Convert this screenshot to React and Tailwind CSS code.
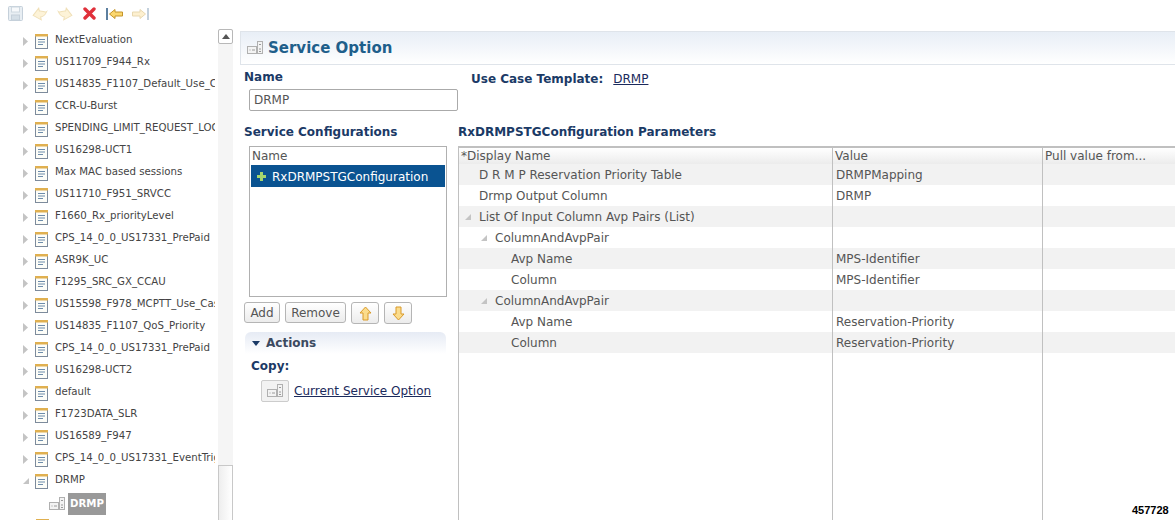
const treeItems = [
  'NextEvaluation', 'US11709_F944_Rx', 'US14835_F1107_Default_Use_Case', 'CCR-U-Burst',
  'SPENDING_LIMIT_REQUEST_LOCAL', 'US16298-UCT1', 'Max MAC based sessions', 'US11710_F951_SRVCC',
  'F1660_Rx_priorityLevel', 'CPS_14_0_0_US17331_PrePaid', 'ASR9K_UC', 'F1295_SRC_GX_CCAU',
  'US15598_F978_MCPTT_Use_Case', 'US14835_F1107_QoS_Priority', 'CPS_14_0_0_US17331_PrePaid',
  'US16298-UCT2', 'default', 'F1723DATA_SLR', 'US16589_F947', 'CPS_14_0_0_US17331_EventTrigger',
];

const params = [
  { name: 'D R M P Reservation Priority Table', value: 'DRMPMapping', indent: 20 },
  { name: 'Drmp Output Column', value: 'DRMP', indent: 20 },
  { name: 'List Of Input Column Avp Pairs (List)', value: '', indent: 20, open: true },
  { name: 'ColumnAndAvpPair', value: '', indent: 36, open: true },
  { name: 'Avp Name', value: 'MPS-Identifier', indent: 52 },
  { name: 'Column', value: 'MPS-Identifier', indent: 52 },
  { name: 'ColumnAndAvpPair', value: '', indent: 36, open: true },
  { name: 'Avp Name', value: 'Reservation-Priority', indent: 52 },
  { name: 'Column', value: 'Reservation-Priority', indent: 52 },
];

const UseCaseIcon = () => (
  <svg width="15" height="17" viewBox="0 0 15 17" className="shrink-0">
    <rect x="1.5" y="1.5" width="12" height="14" fill="#fdfdf8" stroke="#7d8b9c" />
    <rect x="1" y="1" width="13" height="2.5" fill="#e0b050" />
    <path d="M4 6.5h7M4 9h7M4 11.5h5" stroke="#6d8cab" strokeWidth="1" />
  </svg>
);

const ServiceIcon = ({ className = '' }) => (
  <svg width="16" height="14" viewBox="0 0 16 14" className={className}>
    <rect x="0.5" y="5.5" width="9" height="7" fill="#f3f3f3" stroke="#b0b0b0" />
    <rect x="10.5" y="0.5" width="5" height="12" fill="#f3f3f3" stroke="#b0b0b0" />
    <path d="M2.5 9h1M5 9h3M12 3.5h2M12 8h2M12 10.5h2" stroke="#9a9a9a" />
  </svg>
);

const TreeArrow = ({ open }) =>
  open ? (
    <svg width="6" height="6" viewBox="0 0 6 6" className="shrink-0">
      <path d="M6 0V6H0Z" fill="#c4c4c4" />
    </svg>
  ) : (
    <svg width="5" height="9" viewBox="0 0 5 9" className="shrink-0">
      <path d="M0 0L5 4.5L0 9Z" fill="#c4c4c4" />
    </svg>
  );

const ArrowButton = ({ down }) => (
  <button className="flex h-[22px] w-[28px] items-center justify-center rounded-[3px] border border-[#b5b5b5] bg-gradient-to-b from-white to-[#ececec]">
    <svg width="13" height="15" viewBox="0 0 13 15" className={down ? 'rotate-180' : ''}>
      <path d="M6.5 1L12 7H9V14H4V7H1Z" fill="#fbdc8c" stroke="#d99a2b" strokeLinejoin="round" />
    </svg>
  </button>
);

const Toolbar = () => (
  <div className="flex h-[27px] items-center pl-2">
    <svg width="15" height="15" viewBox="0 0 15 15">
      <rect x="0.5" y="0.5" width="14" height="14" rx="1" fill="#e8eef3" stroke="#c5d0da" />
      <rect x="3.5" y="1" width="8" height="5" fill="#f7f9fb" stroke="#ced8e0" />
      <rect x="3.5" y="9" width="8" height="5" fill="#d5dfe7" stroke="#c5d0da" />
    </svg>
    <svg width="16" height="14" viewBox="0 0 16 14" className="ml-[9px]">
      <path d="M8 1L1 7L8 13V10C11 10 13 9 15 6C13 7 11 4 8 4Z" transform="rotate(-12 8 7)" fill="#fdf3d8" stroke="#f0e0b8" />
    </svg>
    <svg width="16" height="14" viewBox="0 0 16 14" className="ml-[9px]">
      <path d="M8 1L15 7L8 13V10C5 10 3 9 1 6C3 7 5 4 8 4Z" transform="rotate(12 8 7)" fill="#fdf3d8" stroke="#f0e0b8" />
    </svg>
    <svg width="13" height="13" viewBox="0 0 13 13" className="ml-[10px]">
      <path d="M2 2L11 11M11 2L2 11" stroke="#e0303a" strokeWidth="3.4" strokeLinecap="round" />
    </svg>
    <div className="ml-[10px] h-[12px] w-[2px] bg-[#5c7f9f]" />
    <svg width="14" height="10" viewBox="0 0 14 10" className="ml-[1px]">
      <path d="M0.5 5L6 0.5V3H13.5V7H6V9.5Z" fill="#fbd76f" stroke="#c4942a" />
    </svg>
    <svg width="14" height="10" viewBox="0 0 14 10" className="ml-[9px]">
      <path d="M13.5 5L8 0.5V3H0.5V7H8V9.5Z" fill="#fdf0d0" stroke="#e8d8b0" />
    </svg>
    <div className="ml-[1px] h-[12px] w-[2px] bg-[#c3d0dc]" />
  </div>
);

const Tree = () => (
  <div className="flex w-[240px] shrink-0 overflow-hidden">
    <div className="w-[215px] shrink-0 overflow-hidden pl-[23px] pt-[3px] text-[10.2px] text-[#444]">
      {treeItems.map((item, i) => (
        <div key={i} className="flex h-[22px] items-center whitespace-nowrap">
          <TreeArrow />
          <span className="ml-[6px] flex"><UseCaseIcon /></span>
          <span className="ml-[6px] -translate-y-px">{item}</span>
        </div>
      ))}
      <div className="flex h-[22px] items-center whitespace-nowrap">
        <TreeArrow open />
        <span className="ml-[5px] flex"><UseCaseIcon /></span>
        <span className="ml-[6px] -translate-y-px">DRMP</span>
      </div>
      <div className="mt-px flex h-[22px] items-center pl-[26px]">
        <ServiceIcon />
        <span className="ml-[3px] flex h-[22px] w-[38px] items-center justify-center bg-[#999] font-bold text-white">DRMP</span>
      </div>
      <div className="ml-[12px] mt-[3px]"><UseCaseIcon /></div>
    </div>
    <div className="ml-[3px] mt-[2px] flex w-[15px] shrink-0 flex-col bg-[#f5f5f5]">
      <div className="flex h-[15px] items-center justify-center rounded-[2px] border border-[#b8b8b8] bg-white">
        <div className="h-0 w-0 border-x-[4px] border-b-[5px] border-x-transparent border-b-[#555]" />
      </div>
      <div className="mt-auto h-[55px] border-x border-t border-[#c8c8c8] bg-gradient-to-r from-[#eee] to-white" />
    </div>
  </div>
);

const ParamColumn = ({ title, width, children }) => (
  <div className={`flex flex-col border-l border-[#c0c0c0] ${width}`}>
    <div className="h-[16px] shrink-0 bg-gradient-to-b from-white to-[#ececec] pl-[2px] leading-[16px]">{title}</div>
    {children}
  </div>
);

const rowBg = (i) => (i % 2 === 0 ? 'bg-[#f2f2f2]' : 'bg-white');

const ParamTable = () => (
  <div className="mt-[5px] flex min-h-0 flex-1 border-t-2 border-[#c0c0c0] text-[12px] text-[#555]">
    <ParamColumn title="*Display Name" width="w-[374px]">
      {params.map((row, i) => (
        <div key={i} className={`flex h-[21px] items-center ${rowBg(i)}`} style={{ paddingLeft: row.indent }}>
          {row.open && (
            <span className="-ml-[14px] mr-[8px] flex"><TreeArrow open /></span>
          )}
          {row.name}
        </div>
      ))}
    </ParamColumn>
    <ParamColumn title="Value" width="w-[210px]">
      {params.map((row, i) => (
        <div key={i} className={`flex h-[21px] items-center pl-[3px] ${rowBg(i)}`}>{row.value}</div>
      ))}
    </ParamColumn>
    <ParamColumn title="Pull value from..." width="flex-1">
      {params.map((row, i) => (
        <div key={i} className={`h-[21px] ${rowBg(i)}`} />
      ))}
    </ParamColumn>
  </div>
);

const App = () => (
  <div className="relative h-[520px] w-[1175px] overflow-hidden bg-white font-['DejaVu_Sans',sans-serif]">
    <Toolbar />
    <div className="flex h-[493px]">
      <Tree />
      <div className="flex min-w-0 flex-1 flex-col pt-[4px]">
        <div className="flex h-[34px] shrink-0 items-center border border-r-0 border-[#dfe4ea] bg-gradient-to-b from-[#e8eef6] to-white pl-[6px]">
          <ServiceIcon />
          <span className="ml-[5px] text-[15px] font-bold text-[#1f5f8b]">Service Option</span>
        </div>
        <div className="flex min-h-0 flex-1">
          <div className="w-[218px] shrink-0 pl-[4px]">
            <div className="mt-[3px] text-[12px] font-bold text-[#1b3a66]">Name</div>
            <input
              readOnly
              value="DRMP"
              className="ml-[5px] mt-[3px] h-[22px] w-[209px] rounded-[2px] border border-[#aaa] pl-[4px] text-[12px] text-[#555] outline-none"
            />
            <div className="mt-[12px] text-[12px] font-bold text-[#1b3a66]">Service Configurations</div>
            <div className="ml-[5px] mt-[5px] h-[151px] w-[198px] border border-[#b0b0b0] p-px text-[12px]">
              <div className="h-[17px] pl-px leading-[17px] text-[#555]">Name</div>
              <div className="flex h-[22px] items-center bg-[#0a5391] pl-[5px] text-white">
                <svg width="11" height="11" viewBox="0 0 11 11" className="shrink-0">
                  <path d="M5.5 1V10M1 5.5H10" stroke="#a4d66e" strokeWidth="3" />
                </svg>
                <span className="ml-[5px] translate-y-px">RxDRMPSTGConfiguration</span>
              </div>
            </div>
            <div className="mt-[5px] flex gap-[5px] text-[12px] text-[#555]">
              <button className="h-[21px] w-[36px] rounded-[3px] border border-[#b5b5b5] bg-gradient-to-b from-white to-[#ececec]">Add</button>
              <button className="h-[21px] w-[61px] rounded-[3px] border border-[#b5b5b5] bg-gradient-to-b from-white to-[#ececec]">Remove</button>
              <ArrowButton />
              <ArrowButton down />
            </div>
            <div className="ml-px mt-[8px] flex h-[22px] w-[201px] items-center rounded-t-[6px] bg-gradient-to-b from-[#e6ebf4] to-white pl-[7px]">
              <div className="h-0 w-0 border-x-[4px] border-t-[5px] border-x-transparent border-t-[#1b3a66]" />
              <span className="ml-[6px] text-[12px] font-bold text-[#3c4a60]">Actions</span>
            </div>
            <div className="ml-[7px] mt-[3px] text-[12px] font-bold text-[#1b3a66]">Copy:</div>
            <div className="ml-[17px] mt-[5px] flex items-center">
              <span className="flex h-[22px] w-[28px] items-center justify-center rounded-[2px] border border-[#ccc] bg-[#f2f2f2]"><ServiceIcon /></span>
              <a className="ml-[5px] text-[12px] text-[#1b2a5c] underline">Current Service Option</a>
            </div>
          </div>
          <div className="flex min-w-0 flex-1 flex-col">
            <div className="mt-[5px] flex items-center pl-[13px] text-[12px]">
              <span className="font-bold text-[#1b3a66]">Use Case Template:</span>
              <a className="ml-[10px] text-[#1b2a5c] underline">DRMP</a>
            </div>
            <div className="mt-[35px] text-[12px] font-bold text-[#1b3a66]">RxDRMPSTGConfiguration Parameters</div>
            <ParamTable />
          </div>
        </div>
      </div>
    </div>
    <span className="absolute left-[1132px] top-[502px] font-['Liberation_Sans',sans-serif] text-[11px] font-bold text-black">457728</span>
  </div>
);

export default App;
